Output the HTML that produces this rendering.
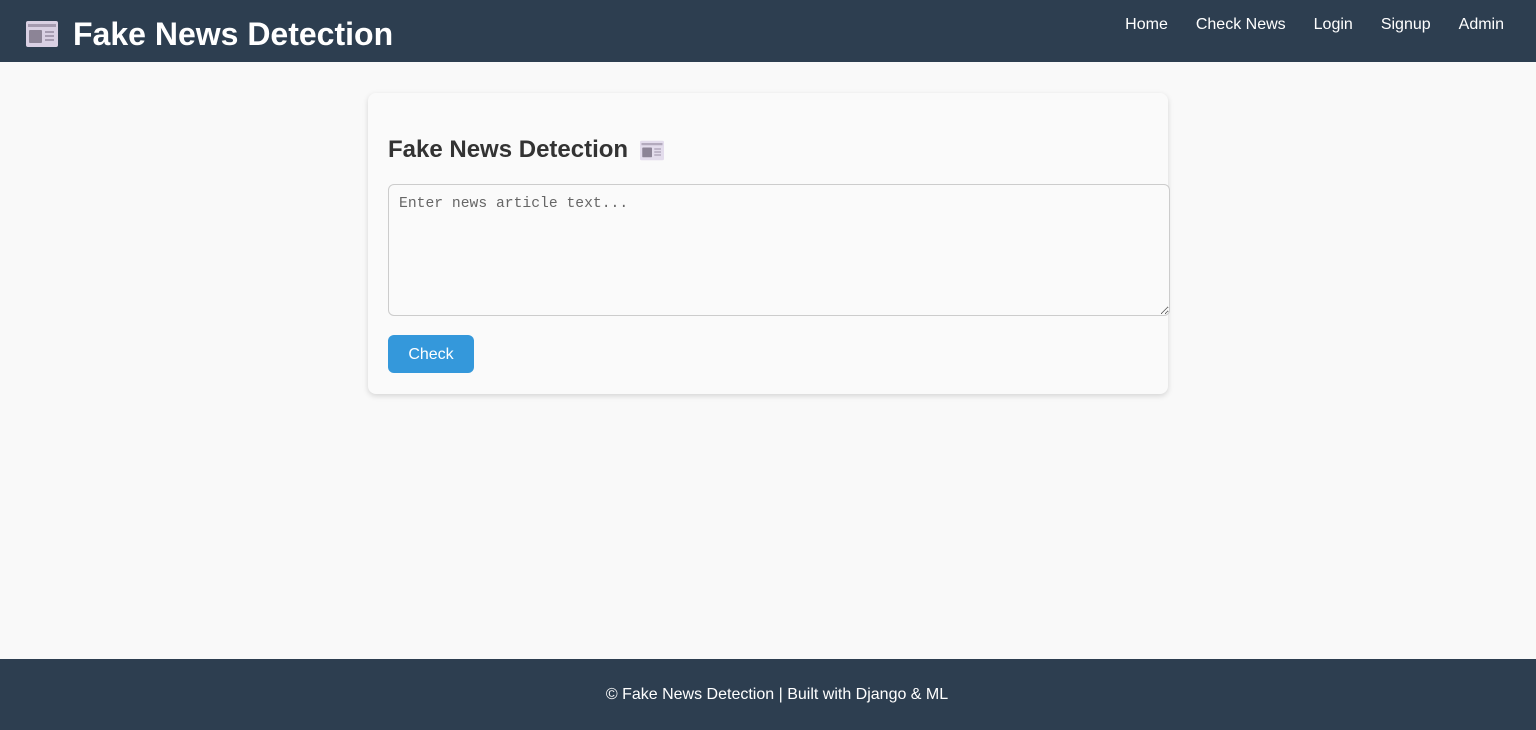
<!DOCTYPE html>
<html><head><meta charset="utf-8"><style>
*{box-sizing:border-box}
body{margin:0;width:1536px;height:730px;background:#f9f9f9;font-family:"Liberation Sans",Arial,sans-serif;position:relative;overflow:hidden}
header{height:62px;background:#2d3e50;position:relative}
.logo{position:absolute;left:26px;top:14px;color:#fff;font-weight:bold;font-size:32px;display:flex;align-items:center;gap:15px;line-height:40px}
nav{position:absolute;right:32px;top:16px;font-size:16px;color:#fff}
nav span{margin-left:28px}
.card{position:absolute;left:368px;top:93px;width:800px;height:301px;background:#fafafa;border-radius:8px;box-shadow:0 2px 6px rgba(0,0,0,.15)}
h2{position:absolute;left:20px;top:43px;margin:0;font-size:24px;color:#333;display:flex;align-items:center;gap:12px}
textarea{position:absolute;left:20px;top:91px;width:782px;height:132px;border:1px solid #ccc;border-radius:6px;background:#fafafa;padding:11px 10px;font-family:"Liberation Mono",monospace;font-size:14.7px;resize:vertical}
textarea::placeholder{color:#666}
.btn{position:absolute;left:20px;top:242px;width:86px;height:38px;background:#3498db;color:#fff;border-radius:6px;font-size:16px;text-align:center;line-height:39px}
footer{position:absolute;left:0;top:659px;width:1536px;height:71px;background:#2d3e50;color:#fff;text-align:center;font-size:16px;line-height:71px;padding-left:18px}
</style></head><body>
<header>
<div class="logo"><svg width="32" height="28" viewBox="0 0 32 28"><rect x="0" y="1" width="32" height="26" rx="2" fill="#d9d0e3"/><rect x="2" y="4" width="28" height="3" fill="#a59bb0"/><rect x="3" y="10" width="13" height="13" rx="1" fill="#8c8496"/><rect x="19" y="11" width="9" height="2" fill="#a59bb0"/><rect x="19" y="15" width="9" height="2" fill="#a59bb0"/><rect x="19" y="19" width="9" height="2" fill="#a59bb0"/></svg>Fake News Detection</div>
<nav><span>Home</span><span>Check News</span><span>Login</span><span>Signup</span><span>Admin</span></nav>
</header>
<div class="card">
<h2>Fake News Detection <svg width="24" height="21" viewBox="0 0 32 28"><rect x="0" y="1" width="32" height="26" rx="2" fill="#e3dcec"/><rect x="2" y="4" width="28" height="3" fill="#b3aabd"/><rect x="3" y="10" width="13" height="13" rx="1" fill="#8c8496"/><rect x="19" y="11" width="9" height="2" fill="#b3aabd"/><rect x="19" y="15" width="9" height="2" fill="#b3aabd"/><rect x="19" y="19" width="9" height="2" fill="#b3aabd"/></svg></h2>
<textarea placeholder="Enter news article text..."></textarea>
<div class="btn">Check</div>
</div>
<footer>© Fake News Detection | Built with Django &amp; ML</footer>
</body></html>
